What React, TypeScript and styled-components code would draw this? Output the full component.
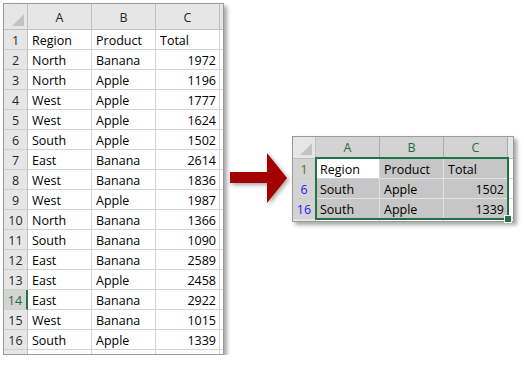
import React from "react";
import styled, { createGlobalStyle, css } from "styled-components";

const Global = createGlobalStyle`
  html, body { margin: 0; padding: 0; background: #ffffff; }
  body { font-family: "Open Sans", "Noto Sans", sans-serif; }
`;

type Row = { n: number; region: string; product: string; total: number };

const leftRows: Row[] = [
  { n: 2, region: "North", product: "Banana", total: 1972 },
  { n: 3, region: "North", product: "Apple", total: 1196 },
  { n: 4, region: "West", product: "Apple", total: 1777 },
  { n: 5, region: "West", product: "Apple", total: 1624 },
  { n: 6, region: "South", product: "Apple", total: 1502 },
  { n: 7, region: "East", product: "Banana", total: 2614 },
  { n: 8, region: "West", product: "Banana", total: 1836 },
  { n: 9, region: "West", product: "Apple", total: 1987 },
  { n: 10, region: "North", product: "Banana", total: 1366 },
  { n: 11, region: "South", product: "Banana", total: 1090 },
  { n: 12, region: "East", product: "Banana", total: 2589 },
  { n: 13, region: "East", product: "Apple", total: 2458 },
  { n: 14, region: "East", product: "Banana", total: 2922 },
  { n: 15, region: "West", product: "Banana", total: 1015 },
  { n: 16, region: "South", product: "Apple", total: 1339 },
];

const rightRows: Row[] = [
  { n: 6, region: "South", product: "Apple", total: 1502 },
  { n: 16, region: "South", product: "Apple", total: 1339 },
];

const Page = styled.div`
  display: flex;
  align-items: flex-start;
  padding: 3px 0 0 3px;
`;

const Sheet = styled.div<{ $rowHdr: number; $tail: number }>`
  position: relative;
  display: grid;
  grid-template-columns: ${(p) => p.$rowHdr}px 64px 64px 64px ${(p) => p.$tail}px;
  border: 1px solid #9a9a9a;
  background: #ffffff;
  box-shadow: 3px 3px 4px rgba(0, 0, 0, 0.35);
`;

const RightSheet = styled(Sheet)`
  margin-top: 133px;
  margin-left: 2px;
`;

const Corner = styled.div<{ $h: number }>`
  position: relative;
  height: ${(p) => p.$h}px;
  box-sizing: border-box;
  background: #e6e6e6;
  border-right: 1px solid #bfbfbf;
  border-bottom: 1px solid #bfbfbf;
  &::after {
    content: "";
    position: absolute;
    right: 3px;
    bottom: 3px;
    width: 0;
    height: 0;
    border-left: 12px solid transparent;
    border-bottom: 12px solid #c3c3c3;
  }
`;

const ColHead = styled.div<{ $h: number; $sel?: boolean }>`
  height: ${(p) => p.$h}px;
  box-sizing: border-box;
  display: flex;
  align-items: center;
  justify-content: center;
  padding-top: 1px;
  font-size: 12.5px;
  color: #262626;
  background: #e6e6e6;
  border-right: 1px solid #bfbfbf;
  border-bottom: 1px solid #bfbfbf;
  ${(p) =>
    p.$sel &&
    css`
      background: #d3d3d3;
      color: #1f6b40;
      border-right-color: #ababab;
      border-bottom: 2px solid #217346;
    `}
`;

const TailHead = styled.div<{ $h: number }>`
  height: ${(p) => p.$h}px;
  box-sizing: border-box;
  background: #e6e6e6;
  border-bottom: 1px solid #bfbfbf;
`;

const RowHead = styled.div<{ $tone?: "blue" | "active" | "olive" }>`
  height: 20px;
  box-sizing: border-box;
  display: flex;
  align-items: center;
  justify-content: center;
  padding-top: 2px;
  font-size: 12.5px;
  color: #262626;
  background: #e6e6e6;
  border-right: 1px solid #bfbfbf;
  border-bottom: 1px solid #cfcfcf;
  ${(p) =>
    p.$tone === "active" &&
    css`
      background: #d3d3d3;
      border-right: 2px solid #217346;
      color: #1f6b40;
    `}
  ${(p) =>
    p.$tone === "olive" &&
    css`
      background: #d3d3d3;
      color: #6b6b00;
    `}
  ${(p) =>
    p.$tone === "blue" &&
    css`
      background: #d3d3d3;
      color: #1a1aff;
    `}
`;

const Cell = styled.div<{ $num?: boolean; $sel?: boolean }>`
  height: 20px;
  box-sizing: border-box;
  display: flex;
  align-items: center;
  justify-content: ${(p) => (p.$num ? "flex-end" : "flex-start")};
  padding: 2px 3px 0 4px;
  font-size: 12.5px;
  color: #000000;
  white-space: nowrap;
  overflow: hidden;
  border-right: 1px solid #d4d4d4;
  border-bottom: 1px solid #d4d4d4;
  background: ${(p) => (p.$sel ? "#c6c6c6" : "#ffffff")};
  ${(p) =>
    p.$sel &&
    css`
      border-right-color: #e2e2e2;
      border-bottom-color: #e2e2e2;
    `}
`;

const TailCell = styled.div`
  height: 20px;
  box-sizing: border-box;
  border-bottom: 1px solid #d4d4d4;
`;

const Filler = styled.div<{ $h: number; $head?: boolean; $last?: boolean }>`
  height: ${(p) => p.$h}px;
  box-sizing: border-box;
  background: ${(p) => (p.$head ? "#e6e6e6" : "#ffffff")};
  border-right: ${(p) => (p.$last ? "none" : p.$head ? "1px solid #bfbfbf" : "1px solid #d4d4d4")};
`;

const Selection = styled.div`
  position: absolute;
  left: 22px;
  top: 20px;
  width: 194px;
  height: 63px;
  box-sizing: border-box;
  border: 2px solid #217346;
  pointer-events: none;
  &::after {
    content: "";
    position: absolute;
    right: -5px;
    bottom: -5px;
    width: 6px;
    height: 6px;
    background: #217346;
    border: 1px solid #ffffff;
  }
`;

const ArrowBox = styled.svg`
  display: block;
  margin-top: 147px;
  margin-left: 4px;
  filter: drop-shadow(2px 2px 2px rgba(0, 0, 0, 0.35));
`;

const Arrow = () => (
  <ArrowBox width="62" height="56" viewBox="0 0 62 56">
    <polygon points="2,22 39,22 39,3 59,28 39,53 39,33 2,33" fill="#a30000" />
  </ArrowBox>
);

const cols = ["A", "B", "C"];

const LeftSheet = () => (
  <Sheet $rowHdr={24} $tail={3}>
    <Corner $h={26} />
    {cols.map((c) => (
      <ColHead key={c} $h={26}>
        {c}
      </ColHead>
    ))}
    <TailHead $h={26} />
    <RowHead>1</RowHead>
    <Cell>Region</Cell>
    <Cell>Product</Cell>
    <Cell>Total</Cell>
    <TailCell />
    {leftRows.map((r) => (
      <React.Fragment key={r.n}>
        <RowHead $tone={r.n === 14 ? "active" : undefined}>{r.n}</RowHead>
        <Cell>{r.region}</Cell>
        <Cell>{r.product}</Cell>
        <Cell $num>{r.total}</Cell>
        <TailCell />
      </React.Fragment>
    ))}
    <Filler $h={4} $head />
    <Filler $h={4} />
    <Filler $h={4} />
    <Filler $h={4} />
    <Filler $h={4} $last />
  </Sheet>
);

const FilteredSheet = () => (
  <RightSheet $rowHdr={23} $tail={5}>
    <Corner $h={22} />
    {cols.map((c) => (
      <ColHead key={c} $h={22} $sel>
        {c}
      </ColHead>
    ))}
    <TailHead $h={22} />
    <RowHead $tone="olive">1</RowHead>
    <Cell>Region</Cell>
    <Cell $sel>Product</Cell>
    <Cell $sel>Total</Cell>
    <TailCell />
    {rightRows.map((r) => (
      <React.Fragment key={r.n}>
        <RowHead $tone="blue">{r.n}</RowHead>
        <Cell $sel>{r.region}</Cell>
        <Cell $sel>{r.product}</Cell>
        <Cell $sel $num>
          {r.total}
        </Cell>
        <TailCell />
      </React.Fragment>
    ))}
    <Filler $h={2} $head />
    <Filler $h={2} />
    <Filler $h={2} />
    <Filler $h={2} />
    <Filler $h={2} $last />
    <Selection />
  </RightSheet>
);

export default function App() {
  return (
    <>
      <Global />
      <Page>
        <LeftSheet />
        <Arrow />
        <FilteredSheet />
      </Page>
    </>
  );
}
